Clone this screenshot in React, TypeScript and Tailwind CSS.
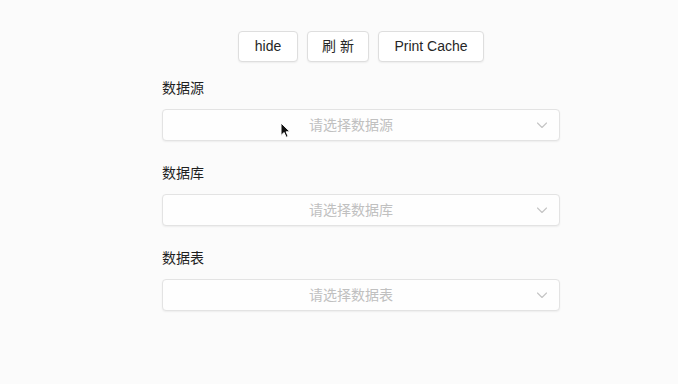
import React from 'react';

const font = { fontFamily: '"Liberation Sans", "Noto Sans CJK SC", sans-serif' };

function Chevron() {
  return (
    <svg width="12" height="12" viewBox="0 0 12 12" fill="none" className="text-[#c4c4c4]">
      <path d="M1.5 4l4.5 4.5L10.5 4" stroke="currentColor" strokeWidth="1.1" strokeLinecap="round" strokeLinejoin="round" />
    </svg>
  );
}

function Field({ label, placeholder }: { label: string; placeholder: string }) {
  return (
    <div className="flex flex-col">
      <div className="h-[22px] leading-[22px] text-[14px] text-[#1f1f1f] mb-[10px]">{label}</div>
      <div className="relative h-[32px] w-full rounded-[4px] border border-[#e3e3e3] bg-[#fefefe] shadow-[0_1px_2px_rgba(0,0,0,0.06)] flex items-center justify-center pr-[20px]">
        <span className="text-[14px] text-[#c0c0c0]">{placeholder}</span>
        <span className="absolute right-[11px] top-[9px]"><Chevron /></span>
      </div>
    </div>
  );
}

function Btn({ children, w }: { children: React.ReactNode; w: string }) {
  return (
    <button className={`${w} h-[31px] rounded-[4px] border border-[#dedede] bg-white text-[14px] text-[#262626] shadow-[0_1px_2px_rgba(0,0,0,0.06)]`}>
      {children}
    </button>
  );
}

export default function App() {
  return (
    <div className="relative w-[678px] h-[384px] bg-[#fbfbfb] overflow-hidden" style={font}>
      <div className="ml-[162px] w-[398px] pt-[31px] flex flex-col">
        <div className="flex justify-center gap-[9px]">
          <Btn w="w-[60px]">hide</Btn>
          <Btn w="w-[62px]">刷 新</Btn>
          <Btn w="w-[106px]">Print Cache</Btn>
        </div>
        <div className="mt-[15px] flex flex-col gap-[21px]">
          <Field label="数据源" placeholder="请选择数据源" />
          <Field label="数据库" placeholder="请选择数据库" />
          <Field label="数据表" placeholder="请选择数据表" />
        </div>
      </div>
      <svg className="absolute left-[280px] top-[122px]" width="11" height="16" viewBox="0 0 11 16">
        <path d="M1 1v12.5l3-3 2.2 4.8 2-0.9-2.1-4.6H10z" fill="#111" stroke="#fff" strokeWidth="1" />
      </svg>
    </div>
  );
}
